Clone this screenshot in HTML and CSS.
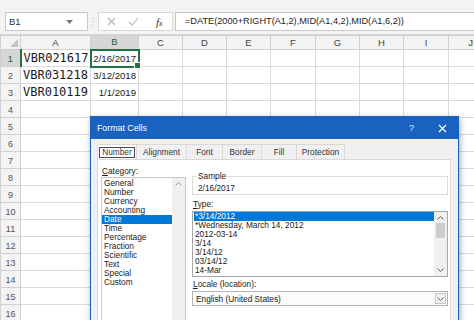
FILE: index.html
```html
<!DOCTYPE html>
<html lang="en">
<head>
    <meta charset="UTF-8">
    <title>Format Cells - Date</title>
    <link rel="stylesheet" href="styles.css">
</head>
<body>
    <div class="formula-bar">
        <div class="name-box">
            <span>B1</span>
            <svg class="caret" width="7" height="4" viewBox="0 0 7 4"><path d="M0 0h7L3.5 4z" fill="#777"/></svg>
        </div>
        <div class="grip">&#8942;</div>
        <div class="func-box">
            <svg width="9" height="9" viewBox="0 0 9 9"><path d="M1 1l7 7M8 1l-7 7" stroke="#b5b5b5" stroke-width="1.1" fill="none"/></svg>
            <svg width="11" height="9" viewBox="0 0 11 9"><path d="M1 5l3 3 6-7" stroke="#b5b5b5" stroke-width="1.1" fill="none"/></svg>
            <span class="fx">f<small>x</small></span>
        </div>
        <div class="formula">=DATE(2000+RIGHT(A1,2),MID(A1,4,2),MID(A1,6,2))</div>
    </div>

    <table class="grid">
        <colgroup>
            <col class="w-hdr"><col class="w-a"><col class="w-b"><col class="w-44"><col class="w-44"><col class="w-44">
            <col class="w-45"><col class="w-44"><col class="w-44"><col class="w-45"><col class="w-44">
        </colgroup>
        <tr class="heads">
            <th class="corner"><span class="tri"></span></th><th>A</th><th class="sel">B</th><th>C</th><th>D</th><th>E</th><th>F</th><th>G</th><th>H</th><th>I</th><th>J</th>
        </tr>
        <tr><th class="sel">1</th><td class="mono">VBR021617</td><td class="num active">2/16/2017</td><td></td><td></td><td></td><td></td><td></td><td></td><td></td><td></td></tr>
        <tr><th>2</th><td class="mono">VBR031218</td><td class="num">3/12/2018</td><td></td><td></td><td></td><td></td><td></td><td></td><td></td><td></td></tr>
        <tr><th>3</th><td class="mono">VBR010119</td><td class="num">1/1/2019</td><td></td><td></td><td></td><td></td><td></td><td></td><td></td><td></td></tr>
        <tr><th>4</th><td></td><td></td><td></td><td></td><td></td><td></td><td></td><td></td><td></td><td></td></tr>
        <tr><th>5</th><td></td><td></td><td></td><td></td><td></td><td></td><td></td><td></td><td></td><td></td></tr>
        <tr><th>6</th><td></td><td></td><td></td><td></td><td></td><td></td><td></td><td></td><td></td><td></td></tr>
        <tr><th>7</th><td></td><td></td><td></td><td></td><td></td><td></td><td></td><td></td><td></td><td></td></tr>
        <tr><th>8</th><td></td><td></td><td></td><td></td><td></td><td></td><td></td><td></td><td></td><td></td></tr>
        <tr><th>9</th><td></td><td></td><td></td><td></td><td></td><td></td><td></td><td></td><td></td><td></td></tr>
        <tr><th>10</th><td></td><td></td><td></td><td></td><td></td><td></td><td></td><td></td><td></td><td></td></tr>
        <tr><th>11</th><td></td><td></td><td></td><td></td><td></td><td></td><td></td><td></td><td></td><td></td></tr>
        <tr><th>12</th><td></td><td></td><td></td><td></td><td></td><td></td><td></td><td></td><td></td><td></td></tr>
        <tr><th>13</th><td></td><td></td><td></td><td></td><td></td><td></td><td></td><td></td><td></td><td></td></tr>
        <tr><th>14</th><td></td><td></td><td></td><td></td><td></td><td></td><td></td><td></td><td></td><td></td></tr>
        <tr><th>15</th><td></td><td></td><td></td><td></td><td></td><td></td><td></td><td></td><td></td><td></td></tr>
        <tr><th>16</th><td></td><td></td><td></td><td></td><td></td><td></td><td></td><td></td><td></td><td></td></tr>
    </table>

    <div class="dialog">
        <div class="title-bar">
            <span class="title">Format Cells</span>
            <span class="help">?</span>
            <svg class="close" width="9" height="9" viewBox="0 0 9 9"><path d="M1 1l7 7M8 1l-7 7" stroke="#fff" stroke-width="1.2" fill="none"/></svg>
        </div>
        <div class="dialog-body">
            <div class="tabs">
                <div class="tab current"><span class="focus">Number</span></div>
                <div class="tab">Alignment</div>
                <div class="tab">Font</div>
                <div class="tab">Border</div>
                <div class="tab">Fill</div>
                <div class="tab">Protection</div>
            </div>
            <div class="panel">
                <div class="col-left">
                    <div class="label"><u>C</u>ategory:</div>
                    <div class="listbox cat-list">
                        <ul>
                            <li>General</li>
                            <li>Number</li>
                            <li>Currency</li>
                            <li>Accounting</li>
                            <li class="picked">Date</li>
                            <li>Time</li>
                            <li>Percentage</li>
                            <li>Fraction</li>
                            <li>Scientific</li>
                            <li>Text</li>
                            <li>Special</li>
                            <li>Custom</li>
                        </ul>
                        <div class="vscroll">
                            <svg class="arrow" width="7" height="4" viewBox="0 0 7 4"><path d="M0.5 3.5l3-3 3 3" stroke="#a0a0a0" fill="none"/></svg>
                        </div>
                    </div>
                </div>
                <div class="col-right">
                    <fieldset class="sample">
                        <legend>Sample</legend>
                        <div>2/16/2017</div>
                    </fieldset>
                    <div class="label type-label"><u>T</u>ype:</div>
                    <div class="listbox type-list">
                        <ul>
                            <li class="picked">*3/14/2012</li>
                            <li>*Wednesday, March 14, 2012</li>
                            <li>2012-03-14</li>
                            <li>3/14</li>
                            <li>3/14/12</li>
                            <li>03/14/12</li>
                            <li>14-Mar</li>
                        </ul>
                        <div class="vscroll">
                            <svg class="arrow" width="7" height="4" viewBox="0 0 7 4"><path d="M0.5 3.5l3-3 3 3" stroke="#606060" fill="none"/></svg>
                            <div class="thumb"></div>
                            <svg class="arrow down" width="7" height="4" viewBox="0 0 7 4"><path d="M0.5 0.5l3 3 3-3" stroke="#606060" fill="none"/></svg>
                        </div>
                    </div>
                    <div class="label locale-label"><u>L</u>ocale (location):</div>
                    <div class="dropdown">
                        <span>English (United States)</span>
                        <span class="drop-btn">
                            <svg width="7" height="4" viewBox="0 0 7 4"><path d="M0.5 0.5l3 3 3-3" stroke="#606060" fill="none"/></svg>
                        </span>
                    </div>
                </div>
            </div>
        </div>
    </div>
</body>
</html>
```

FILE: styles.css
```css
* {
    box-sizing: border-box;
}
body {
    margin: 0;
    width: 474px;
    height: 320px;
    overflow: hidden;
    position: relative;
    background: #fff;
    font-family: "Liberation Sans", Arial, sans-serif;
    color: #222;
}

/* formula bar */
.formula-bar {
    height: 35px;
    background: #f3f3f3;
    display: flex;
    align-items: flex-start;
    padding: 12px 0 0 5px;
    border-bottom: 1px solid #d8d8d8;
}
.name-box {
    width: 83px;
    height: 19px;
    background: #fff;
    border: 1px solid #c8c8c8;
    display: flex;
    align-items: center;
    justify-content: space-between;
    padding: 0 14px 0 3px;
    font-size: 9.5px;
    color: #333;
}
.grip {
    width: 10px;
    height: 19px;
    line-height: 19px;
    text-align: center;
    color: #b8b8b8;
    font-size: 10px;
}
.func-box {
    width: 75px;
    height: 19px;
    background: #fff;
    border: 1px solid #d8d8d8;
    display: flex;
    align-items: center;
    gap: 12px;
    padding-left: 8px;
}
.fx {
    font-family: "Liberation Serif", serif;
    font-style: italic;
    font-size: 11px;
    color: #333;
    margin-left: 5px;
}
.fx small {
    font-size: 8px;
}
.formula {
    flex: 1;
    height: 19px;
    margin-left: 2px;
    background: #fff;
    border: 1px solid #c8c8c8;
    border-right: none;
    padding-left: 9px;
    line-height: 17px;
    font-size: 9.2px;
    color: #222;
    white-space: nowrap;
}

/* sheet */
.grid {
    border-collapse: collapse;
    table-layout: fixed;
    width: 488px;
}
.w-hdr { width: 20px; }
.w-a { width: 70px; }
.w-b { width: 48px; }
.w-44 { width: 44px; }
.w-45 { width: 45px; }
.grid tr {
    height: 17px;
}
.grid tr.heads {
    height: 14px;
}
.grid th {
    background: #f3f3f3;
    border: 1px solid #d0d0d0;
    font-weight: normal;
    color: #555;
    padding: 0;
}
.heads th {
    font-size: 9.5px;
    color: #444;
    line-height: 12px;
}
.grid tr th:first-child {
    font-size: 9px;
    vertical-align: bottom;
    padding-bottom: 2px;
    line-height: 10px;
}
.grid th.sel {
    background: #d6d6d6;
    color: #1f5c3a;
}
.heads th.sel {
    border-bottom: 2px solid #217346;
}
.grid tr th.sel:first-child {
    border-right: 2px solid #217346;
}
.corner {
    position: relative;
}
.tri {
    position: absolute;
    right: 2px;
    bottom: 2px;
    border-left: 8px solid transparent;
    border-bottom: 8px solid #c4c4c4;
}
.grid td {
    border: 1px solid #dadada;
    padding: 0 2px 1px;
    vertical-align: bottom;
    white-space: nowrap;
    overflow: hidden;
}
.mono {
    font-family: "DejaVu Sans Mono", "Liberation Mono", monospace;
    font-size: 12px;
    line-height: 14px;
    color: #1a1a1a;
}
.num {
    text-align: right;
    font-size: 9.6px;
    line-height: 12px;
    color: #1a1a1a;
}
.grid td.active {
    outline: 2px solid #217346;
    outline-offset: -1px;
    position: relative;
    overflow: visible;
}
.active::after {
    content: "";
    position: absolute;
    right: -3px;
    bottom: -3px;
    width: 5px;
    height: 5px;
    background: #217346;
    border: 1px solid #fff;
}

/* dialog */
.dialog {
    position: absolute;
    left: 90px;
    top: 116px;
    width: 369px;
    height: 220px;
    background: #f0f0f0;
    border: 1px solid #1a62c0;
    box-shadow: 1px 2px 6px rgba(0, 0, 0, 0.35);
    font-size: 8.3px;
    color: #1a1a1a;
}
.title-bar {
    height: 22px;
    background: #1a62c0;
    color: #fff;
    display: flex;
    align-items: center;
    padding: 0 11px 0 6px;
}
.title {
    flex: 1;
    font-size: 8.8px;
}
.help {
    font-size: 9px;
    margin-right: 24px;
    color: #e8eefa;
}
.dialog-body {
    padding: 5px 7px 0 6px;
}
.tabs {
    display: grid;
    grid-template-columns: 40px 50px 36px 39px 35px 48px;
    height: 15px;
}
.tab {
    border: 1px solid #d9d9d9;
    border-bottom: none;
    border-left: none;
    text-align: center;
    line-height: 14px;
    color: #333;
}
.tab:first-child {
    border-left: 1px solid #d9d9d9;
}
.tab.current {
    background: #fff;
    display: flex;
    align-items: center;
    justify-content: center;
}
.focus {
    border: 1px solid #4a4a4a;
    padding: 0 2px;
    line-height: 9px;
}
.panel {
    background: #fff;
    border: 1px solid #d9d9d9;
    height: 180px;
    padding: 6px 2px 0 3px;
    display: grid;
    grid-template-columns: 85px 256px;
    column-gap: 6px;
    align-items: start;
}
.label {
    line-height: 10px;
    height: 10px;
    padding-left: 1px;
}
.listbox {
    display: flex;
    background: #fff;
    border: 1px solid #a8a8a8;
}
.listbox ul {
    list-style: none;
    margin: 0;
    padding: 0;
    flex: 1;
}
.listbox li {
    line-height: 9px;
    height: 9px;
    white-space: nowrap;
}
.listbox li.picked {
    background: #0078d7;
    color: #fff;
}
.cat-list {
    margin-top: 1px;
    height: 150px;
    border-color: #c8c8c8;
}
.cat-list ul {
    padding-top: 1px;
}
.cat-list li {
    padding-left: 2px;
}
.vscroll {
    width: 13px;
    background: #f0f0f0;
    display: flex;
    flex-direction: column;
    align-items: center;
}
.arrow {
    margin-top: 4px;
}
.arrow.down {
    margin-top: auto;
    margin-bottom: 4px;
}
.thumb {
    width: 9px;
    height: 15px;
    margin-top: 3px;
    background: #cdcdcd;
}
.sample {
    margin: 5px 0 0;
    padding: 2px 5px 1px;
    border: 1px solid #dcdcdc;
    line-height: 10px;
}
.sample legend {
    padding: 0 1px;
    margin-left: -1px;
    line-height: 10px;
}
.type-label {
    margin-top: 4px;
}
.type-list {
    margin-top: 2px;
    height: 66px;
}
.type-list ul {
    padding-left: 1px;
}
.type-list li {
    padding-left: 1px;
}
.locale-label {
    margin-top: 2px;
}
.dropdown {
    margin-top: 2px;
    height: 15px;
    border: 1px solid #b4b4b4;
    background: #fbfbfb;
    display: flex;
    align-items: center;
    justify-content: space-between;
    padding: 0 1px 0 3px;
}
.drop-btn {
    width: 11px;
    height: 11px;
    border: 1px solid #c8c8c8;
    background: #f0f0f0;
    display: flex;
    align-items: center;
    justify-content: center;
}
```
